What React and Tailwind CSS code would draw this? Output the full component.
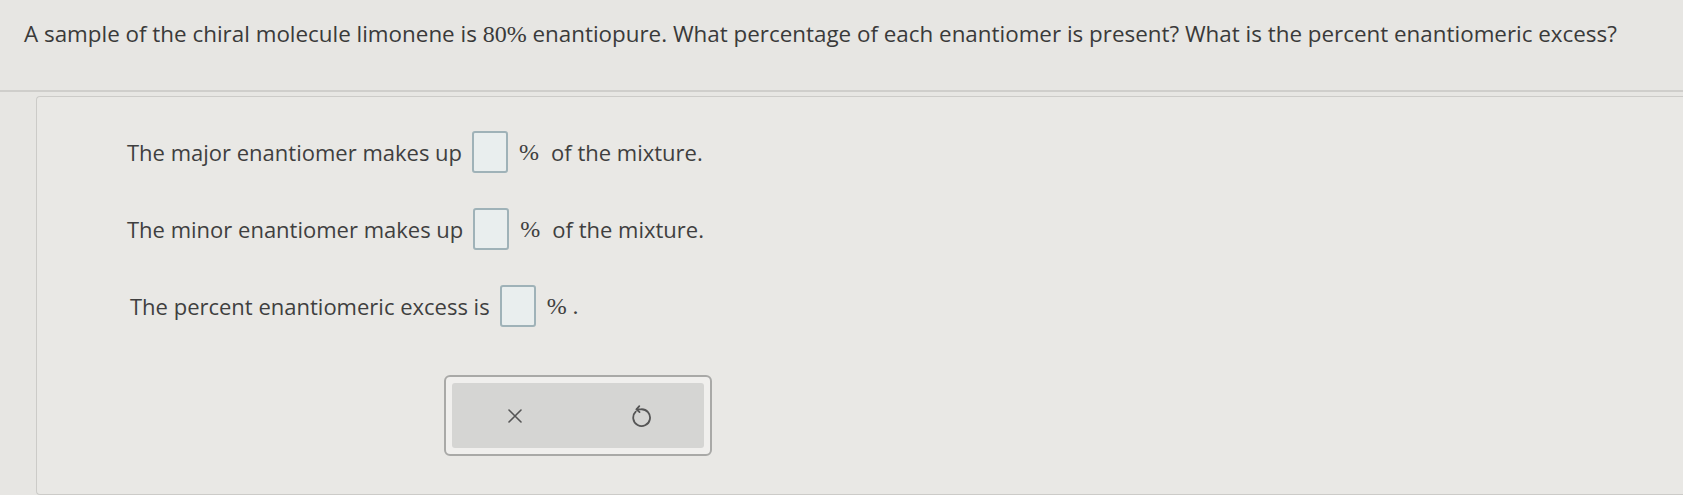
import React from 'react'

const sans = { fontFamily: '"Open Sans", "DejaVu Sans", sans-serif' }
const serif = { fontFamily: '"Liberation Serif", serif' }

function Blank({ className = '' }) {
  return <span className={`inline-block w-[36px] h-[42px] rounded-[3px] border-2 border-[#9fb2b8] bg-[#e9eeee] ${className}`} />
}

function Row({ label, after }) {
  return (
    <div className="flex items-center h-[42px] text-[22px] text-[#3f3f3f]">
      <span>{label}</span>
      <Blank className="ml-[10px]" />
      {after}
    </div>
  )
}

export default function App() {
  return (
    <div className="w-[1683px] h-[495px] overflow-hidden bg-[#e7e6e3] flex flex-col" style={sans}>
      <p className="pl-[24px] pt-[19px] text-[22.4px] leading-[30px] text-[#3a3a3a] whitespace-nowrap">
        A sample of the chiral molecule limonene is <span style={serif} className="text-[24px]">80%</span> enantiopure. What percentage of each enantiomer is present? What is the percent enantiomeric excess?
      </p>
      <div className="mt-[41px] h-[2px] bg-[#cfcecb]" />
      <div className="mt-[4px] ml-[36px] flex-1 border-l border-b border-t border-[#cccbc8] rounded-bl-[4px] rounded-tl-[4px] bg-[#e9e8e5] pl-[90px] pt-[34px]">
        <div className="flex flex-col gap-[35px]">
          <Row
            label="The major enantiomer makes up"
            after={<><span style={serif} className="ml-[11px] text-[24px]">%</span><span className="ml-[12px]">of the mixture.</span></>}
          />
          <Row
            label="The minor enantiomer makes up"
            after={<><span style={serif} className="ml-[11px] text-[24px]">%</span><span className="ml-[12px]">of the mixture.</span></>}
          />
          <div className="pl-[3px]">
            <Row
              label="The percent enantiomeric excess is"
              after={<span style={serif} className="ml-[11px] text-[24px]">%&nbsp;.</span>}
            />
          </div>
        </div>
        <div className="mt-[48px] ml-[317px] w-[268px] h-[81px] rounded-[6px] border-2 border-[#a9a9a7] bg-[#f0efed] p-[6px] flex">
          <div className="flex-1 rounded-[3px] bg-[#d5d5d3] flex items-center">
            <div className="w-1/2 flex justify-center">
              <svg width="20" height="20" viewBox="0 0 20 20" fill="none" stroke="#555" strokeWidth="1.6" strokeLinecap="round">
                <path d="M4 4 L16 16 M16 4 L4 16" />
              </svg>
            </div>
            <div className="w-1/2 flex justify-center">
              <svg width="24" height="24" viewBox="0 0 20 20" fill="none" stroke="#555" strokeWidth="1.5" strokeLinecap="round" strokeLinejoin="round">
                <path d="M5.6 6.4 A7 7 0 1 0 10 4.4 H6.4" />
                <path d="M8.6 1.8 L6.2 4.4 L8.8 6.8" />
              </svg>
            </div>
          </div>
        </div>
      </div>
    </div>
  )
}
